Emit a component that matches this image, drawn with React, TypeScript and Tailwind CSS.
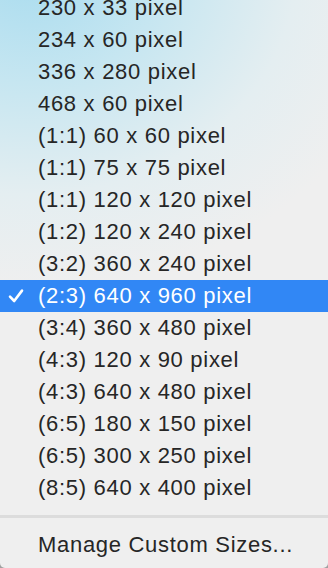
import React from "react";

const items = [
  "230 x 33 pixel",
  "234 x 60 pixel",
  "336 x 280 pixel",
  "468 x 60 pixel",
  "(1:1) 60 x 60 pixel",
  "(1:1) 75 x 75 pixel",
  "(1:1) 120 x 120 pixel",
  "(1:2) 120 x 240 pixel",
  "(3:2) 360 x 240 pixel",
  "(2:3) 640 x 960 pixel",
  "(3:4) 360 x 480 pixel",
  "(4:3) 120 x 90 pixel",
  "(4:3) 640 x 480 pixel",
  "(6:5) 180 x 150 pixel",
  "(6:5) 300 x 250 pixel",
  "(8:5) 640 x 400 pixel",
];

function Check() {
  return (
    <svg width="16" height="16" viewBox="0 0 16 16" className="block">
      <path
        d="M2 8.6 L6.2 13 L14 2.6"
        fill="none"
        stroke="white"
        strokeWidth="2.6"
        strokeLinecap="round"
        strokeLinejoin="round"
      />
    </svg>
  );
}

export default function App() {
  return (
    <div className="w-[328px] h-[568px] bg-[#a0a0a0] overflow-hidden">
      <div
        className="w-[328px] h-[568px] overflow-hidden rounded-b-[5px] bg-[#efefef] bg-[radial-gradient(ellipse_380px_320px_at_30px_-30px,#a9dcef_0%,#c6e6f1_35%,#e4eef1_70%,#efefef_100%)] font-[family-name:'Liberation_Sans',Arial,sans-serif] text-[22px] tracking-[0.7px] text-[#262626]"
      >
        <div className="-mt-[8px] flex flex-col">
          {items.map((t, i) => {
            const sel = i === 9;
            return (
              <div
                key={t}
                className={
                  sel
                    ? "h-[32px] flex items-center bg-[#3187f5] text-white"
                    : "h-[32px] flex items-center"
                }
              >
                <div className="w-[38px] flex justify-center pl-[1px] pr-[7px]">
                  {sel ? <Check /> : null}
                </div>
                <span className="leading-none">{t}</span>
              </div>
            );
          })}
          <div className="pt-[11px] pb-[11px]">
            <div className="h-[3px] bg-[#dcdcdc]" />
          </div>
          <div className="h-[32px] flex items-center pl-[38px]">
            <span className="leading-none">Manage Custom Sizes...</span>
          </div>
        </div>
      </div>
    </div>
  );
}
